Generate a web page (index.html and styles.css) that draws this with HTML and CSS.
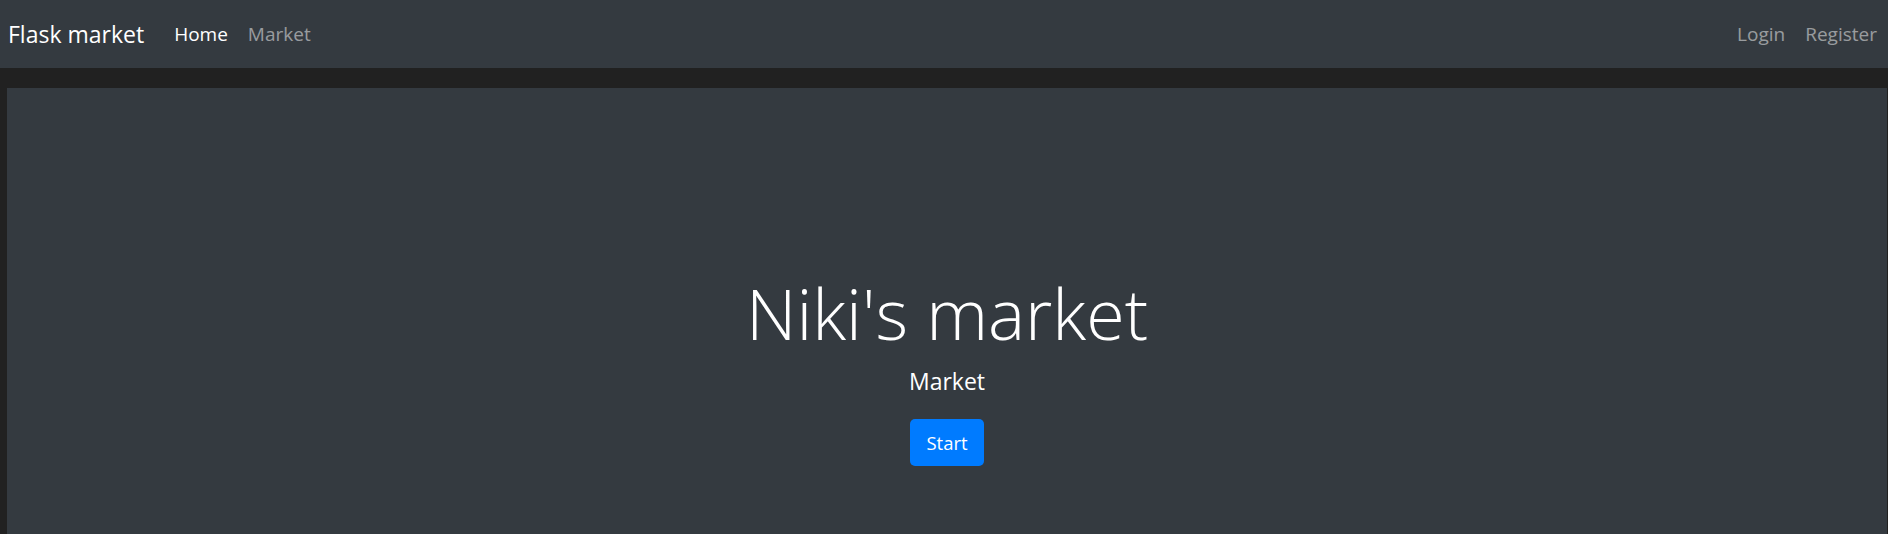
FILE: index.html
```html
<!DOCTYPE html>
<html lang="en">
<head>
<meta charset="utf-8">
<title>Flask market</title>
<link rel="stylesheet" href="styles.css">
</head>
<body>
<nav class="navbar">
  <a class="brand" href="#">Flask market</a>
  <ul class="nav nav-main">
    <li><a class="nav-link active" href="#">Home</a></li>
    <li><a class="nav-link" href="#">Market</a></li>
  </ul>
  <ul class="nav nav-right">
    <li><a class="nav-link" href="#">Login</a></li>
    <li><a class="nav-link" href="#">Register</a></li>
  </ul>
</nav>
<main class="page">
  <section class="hero">
    <h1 class="hero-title">Niki's market</h1>
    <p class="hero-lead">Market</p>
    <a class="btn-start" href="#">Start</a>
  </section>
</main>
</body>
</html>
```
FILE: styles.css
```css
html, body {
  margin: 0;
  padding: 0;
  height: 100%;
}
body {
  background: #212121;
  font-family: "Open Sans", "Noto Sans", sans-serif;
  color: #fff;
  display: flex;
  flex-direction: column;
  overflow: hidden;
}
a { text-decoration: none; }

.navbar {
  height: 68px;
  box-sizing: border-box;
  background: #343a40;
  display: flex;
  align-items: center;
  padding: 0 1px 0 8px;
}
.brand {
  color: #fff;
  font-size: 23px;
  margin-right: 20px;
}
.nav {
  list-style: none;
  margin: 0;
  padding: 0;
  display: flex;
}
.nav-right { margin-left: auto; }
.nav-link {
  display: block;
  padding: 0 10px;
  font-size: 19px;
  color: rgba(255,255,255,0.5);
}
.nav-link.active { color: #fff; }

.page {
  flex: 1;
  display: flex;
  padding: 20px 1px 0 7px;
}
.hero {
  flex: 1;
  background: #343a40;
  display: flex;
  flex-direction: column;
  align-items: center;
  padding-top: 183px;
}
.hero-title {
  margin: 0;
  font-size: 70px;
  font-weight: 300;
  line-height: 84px;
}
.hero-lead {
  margin: 9px 0 0;
  font-size: 23px;
  font-weight: 400;
  line-height: 34px;
}
.btn-start {
  margin-top: 21px;
  width: 74px;
  height: 47px;
  box-sizing: border-box;
  background: #007bff;
  color: #fff;
  border-radius: 5px;
  font-size: 18.5px;
  display: flex;
  align-items: center;
  justify-content: center;
}
```
